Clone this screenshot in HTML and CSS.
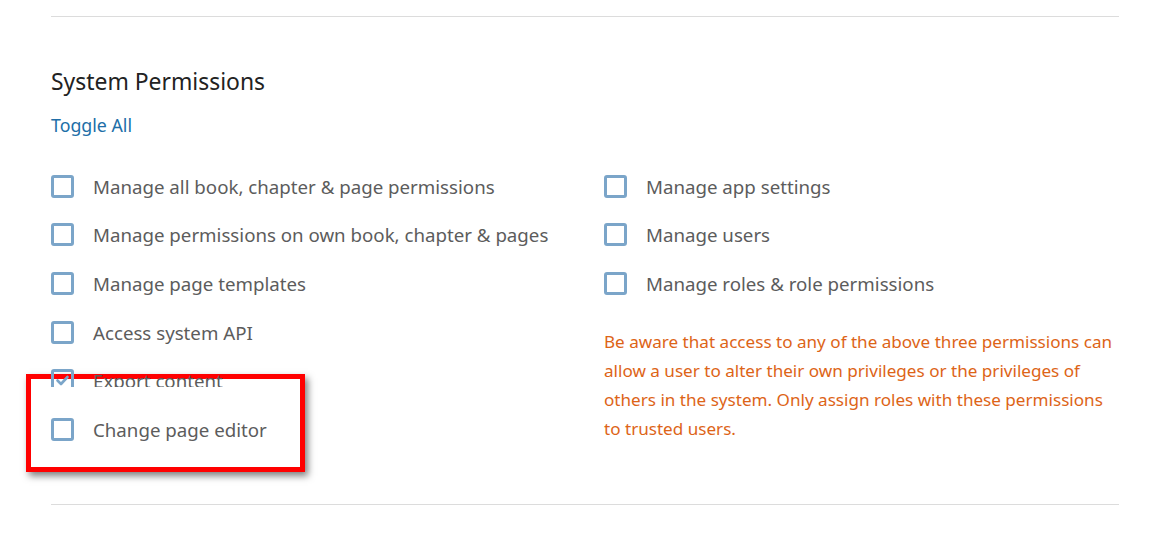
FILE: index.html
```html
<!DOCTYPE html>
<html lang="en">
<head>
<meta charset="utf-8">
<title>System Permissions</title>
<link rel="stylesheet" href="styles.css">
</head>
<body>
<div class="page">
  <section class="perm-section">
    <h2 class="title">System Permissions</h2>
    <a class="toggle" href="#">Toggle All</a>
    <div class="grid">
      <div class="col">
        <label class="perm"><span class="box"></span><span class="label">Manage all book, chapter &amp; page permissions</span></label>
        <label class="perm"><span class="box"></span><span class="label">Manage permissions on own book, chapter &amp; pages</span></label>
        <label class="perm"><span class="box"></span><span class="label">Manage page templates</span></label>
        <label class="perm"><span class="box"></span><span class="label">Access system API</span></label>
        <label class="perm raised clipped"><span class="box checked"><svg viewBox="0 0 17 17" width="17" height="17"><path d="M3.5 8.5 L7 12 L13.5 5" fill="none" stroke="#7ba5c9" stroke-width="2.6" stroke-linecap="round" stroke-linejoin="round"/></svg></span><span class="label">Export content</span></label>
        <label class="perm raised"><span class="box"></span><span class="label">Change page editor</span></label>
      </div>
      <div class="col">
        <label class="perm"><span class="box"></span><span class="label">Manage app settings</span></label>
        <label class="perm"><span class="box"></span><span class="label">Manage users</span></label>
        <label class="perm"><span class="box"></span><span class="label">Manage roles &amp; role permissions</span></label>
        <p class="warn">Be aware that access to any of the above three permissions can allow a user to alter their own privileges or the privileges of others in the system. Only assign roles with these permissions to trusted users.</p>
      </div>
    </div>
  </section>
  <div class="annotation"></div>
</div>
</body>
</html>
```

FILE: styles.css
```css
html, body {
  margin: 0;
  padding: 0;
  background: #fff;
}
body {
  font-family: "Noto Sans", "Open Sans", sans-serif;
  color: #555;
}
.page {
  position: relative;
  padding: 16px 51px 0 51px;
  height: 538px;
  box-sizing: border-box;
}
.perm-section {
  border-top: 1px solid #dcdcdc;
  border-bottom: 1px solid #dcdcdc;
  padding-top: 52px;
  padding-bottom: 50px;
}
.title {
  margin: 0;
  font-size: 22.9px;
  line-height: 26px;
  font-weight: 400;
  color: #222;
}
.toggle {
  display: inline-block;
  margin-top: 18px;
  font-size: 17.8px;
  line-height: 24px;
  color: #206ea7;
  text-decoration: none;
}
.grid {
  display: grid;
  grid-template-columns: 1fr 1fr;
  column-gap: 38px;
  margin-top: 25px;
}
.col {
  display: flex;
  flex-direction: column;
}
.perm {
  display: flex;
  align-items: center;
  height: 48.6px;
  font-size: 18.7px;
  color: #5c5c5c;
}
.raised {
  position: relative;
  z-index: 3;
}
.clipped {
  overflow: hidden;
  height: 31px;
  margin-bottom: 17.6px;
  align-items: flex-start;
}
.clipped .box {
  margin-top: 12.5px;
}
.clipped .label {
  margin-top: 12.4px;
  line-height: 24px;
}
.box {
  width: 23px;
  height: 23px;
  box-sizing: border-box;
  border: 3px solid #7ba5c9;
  border-radius: 3px;
  margin-right: 19px;
  flex: none;
  display: flex;
  align-items: center;
  justify-content: center;
}
.box svg {
  display: block;
}
.warn {
  margin: 19px 0 0 0;
  font-size: 17.1px;
  line-height: 29px;
  color: #dd6417;
}
.annotation {
  position: absolute;
  left: 26px;
  top: 374px;
  width: 279px;
  height: 98px;
  box-sizing: border-box;
  border: 5px solid #ff0000;
  background: #fff;
  box-shadow: 3px 4px 7px rgba(0, 0, 0, 0.5);
  z-index: 2;
}
```
